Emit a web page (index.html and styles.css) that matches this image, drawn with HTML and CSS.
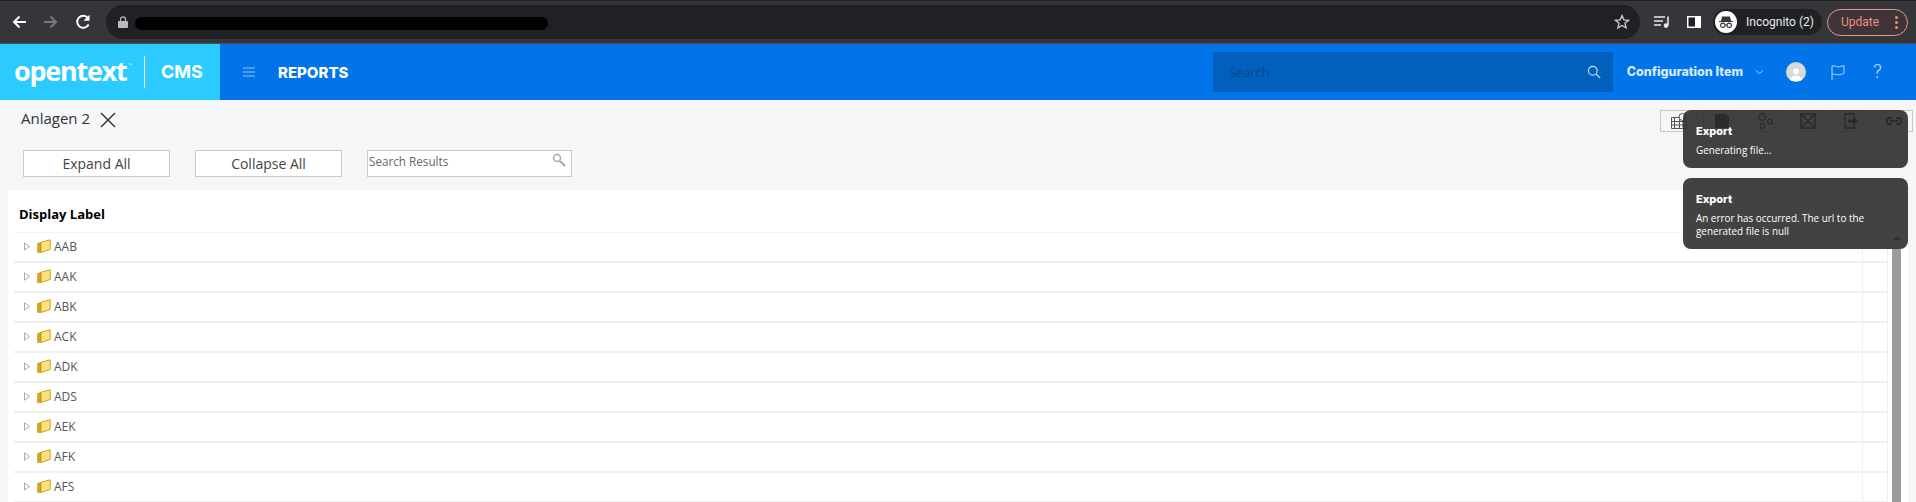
FILE: index.html
```html
<!DOCTYPE html>
<html lang="en">
<head>
<meta charset="utf-8">
<title>OpenText CMS Reports</title>
<link rel="stylesheet" href="styles.css">
</head>
<body>
<div class="browser">
  <svg class="nav-icon" viewBox="0 0 18 18"><path d="M16 9H4M9.500 3.500L4 9l5.500 5.500" fill="none" stroke="#fff" stroke-width="2"/></svg>
  <svg class="nav-icon" viewBox="0 0 18 18"><path d="M2 9h12M8.500 3.500L14 9l-5.500 5.500" fill="none" stroke="#77787b" stroke-width="2"/></svg>
  <svg class="nav-icon" viewBox="0 0 18 18"><path d="M14.600 11.500A6 6 0 1 1 14 5.200" fill="none" stroke="#fff" stroke-width="2"/><path d="M15.500 1.800v6h-6z" fill="#fff"/></svg>
  <div class="omnibox">
    <svg class="lock" viewBox="0 0 10 12"><path d="M2.500 5V3.300a2.500 2.500 0 0 1 5 0V5" fill="none" stroke="#b9babc" stroke-width="1.200"/><rect y="5" width="10" height="7" rx="1" fill="#b9babc"/></svg>
    <span class="redacted"></span>
    <svg class="star" viewBox="0 0 16 16"><path d="M8 1.600l1.900 4.300 4.600.4-3.500 3 1.100 4.600L8 11.500l-4.100 2.400L5 9.300l-3.500-3 4.600-.4z" fill="none" stroke="#c6c7c9" stroke-width="1.400"/></svg>
  </div>
  <svg class="queue" viewBox="0 0 16 12"><path d="M0 1h11M0 5h9M0 9h7" stroke="#e8eaed" stroke-width="1.500"/><path d="M14 .5V9.500" stroke="#e8eaed" stroke-width="1.600"/><circle cx="12" cy="9.600" r="2.300" fill="#e8eaed"/></svg>
  <svg class="sidepanel" viewBox="0 0 14 12"><rect width="14" height="12" fill="#fff"/><rect x="1.500" y="1.500" width="6.500" height="9" fill="#202124"/></svg>
  <div class="incognito">
    <span class="incognito-face"><svg viewBox="0 0 16 16" width="16" height="16"><path d="M1 7h14v1H1zM4 2.500h8L13 7H3z" fill="#35363a"/><circle cx="4.800" cy="11.300" r="2.200" fill="none" stroke="#35363a" stroke-width="1.100"/><circle cx="11.200" cy="11.300" r="2.200" fill="none" stroke="#35363a" stroke-width="1.100"/><path d="M7 11h2" stroke="#35363a"/></svg></span>
    <span>Incognito (2)</span>
  </div>
  <div class="update"><span>Update</span><span class="dots"><i></i><i></i><i></i></span></div>
</div>

<header class="appbar">
  <div class="brand">
    <span class="brand-word">opentext<sup>™</sup></span>
    <span class="brand-name">CMS</span>
  </div>
  <svg class="burger" viewBox="0 0 12 10"><path d="M0 1h12M0 5h12M0 9h12" stroke="#8fc3f5" stroke-width="1.200"/></svg>
  <div class="section">REPORTS</div>
  <div class="global-search">
    <span>Search</span>
    <svg viewBox="0 0 14 14" width="14" height="14"><circle cx="5.800" cy="5.800" r="4.400" fill="none" stroke="#cfe4fa" stroke-width="1.100"/><path d="M9 9l4.200 4.200" stroke="#cfe4fa" stroke-width="1.100"/></svg>
  </div>
  <div class="ci-select">Configuration Item
    <svg viewBox="0 0 10 6" width="9" height="6"><path d="M1 1l4 4 4-4" fill="none" stroke="#bcdcfb" stroke-width="1"/></svg>
  </div>
  <span class="avatar"><svg viewBox="0 0 16 16" width="16" height="16"><circle cx="8" cy="5.500" r="3" fill="#fff"/><path d="M2 15c.5-4 3-5.200 6-5.200s5.500 1.200 6 5.200z" fill="#fff"/></svg></span>
  <svg class="flag" viewBox="0 0 14 16"><path d="M1 16V2c3-1 3.500 .8 6 .8S11 2 13 1.500v8c-2 .5-3.500 1.300-6 1.300S3 9.500 1 10.500" fill="none" stroke="#b5d7fa" stroke-width="1"/></svg>
  <span class="help">?</span>
</header>

<main class="page">
  <div class="title-row">
    <div class="title">Anlagen 2
      <svg viewBox="0 0 16 16" width="16" height="16"><path d="M1 1l14 14M15 1L1 15" stroke="#2b2b2b" stroke-width="1.400"/></svg>
    </div>
    <div class="tools">
      <button class="tool"><svg viewBox="0 0 16 16" width="16" height="16"><path d="M.5 4.500h8v11h-8zM8.500 8.500h7v7h-7zM.5 8.500h15M.5 12h15M3.500 4.500v11M8.500 4.500v11M12 8.500v7" fill="none" stroke="#555" stroke-width="1"/><circle cx="11.500" cy="4" r="3.500" fill="#f5f6f8" stroke="#555"/></svg></button>
      <button class="tool"><svg viewBox="0 0 16 16" width="16" height="16"><path d="M1 1h11l3 3v11H1z" fill="#111"/></svg></button>
      <button class="tool"><svg viewBox="0 0 16 16" width="16" height="16"><circle cx="5" cy="4" r="3.300" fill="none" stroke="#111" stroke-width="1.200"/><circle cx="13" cy="8.500" r="2.400" fill="none" stroke="#111" stroke-width="1.200"/><circle cx="5.500" cy="13" r="2.400" fill="none" stroke="#111" stroke-width="1.200"/></svg></button>
      <button class="tool"><svg viewBox="0 0 16 16" width="16" height="16"><path d="M1 1h14L1 15h14zM1 1v14M15 1v14" fill="none" stroke="#111" stroke-width="1.500"/></svg></button>
      <button class="tool"><svg viewBox="0 0 16 16" width="16" height="16"><path d="M2 1h9v14H2z" fill="none" stroke="#000" stroke-width="1.300"/><path d="M5 6.500h5V4l5 4-5 4V9.500H5z" fill="#000"/></svg></button>
      <button class="tool"><svg viewBox="0 0 16 8" width="16" height="8"><path d="M6 1H2.500A1.500 1.500 0 0 0 1 2.500v3A1.500 1.500 0 0 0 2.500 7H6M10 1h3.500A1.500 1.500 0 0 1 15 2.500v3A1.500 1.500 0 0 1 13.500 7H10M4 4h8" fill="none" stroke="#000" stroke-width="1.800"/></svg></button>
    </div>
  </div>

  <div class="actions">
    <button class="action">Expand All</button>
    <button class="action">Collapse All</button>
    <div class="result-search">
      <span>Search Results</span>
      <svg viewBox="0 0 14 14" width="14" height="14"><circle cx="5" cy="5" r="3.500" fill="none" stroke="#aaa" stroke-width="1.500"/><path d="M8 8l5 5" stroke="#aaa" stroke-width="2.200"/></svg>
    </div>
  </div>

  <section class="panel">
    <div class="panel-head">Display Label</div>
    <div class="rows">
      <div class="row"><div class="cell-main"><svg class="twisty" viewBox="0 0 6 9"><path d="M.5.8l5 3.700-5 3.700z" fill="#fff" stroke="#a9a9a9"/></svg><svg class="folder" viewBox="0 0 14 14"><path d="M.6 4.500L4 3.500v9.800l-3.400.3z" fill="#d6a71c" stroke="#b98d10" stroke-width=".6"/><path d="M4 3.200L13.200.8v9.700L4 13.500z" fill="#ffe27a" stroke="#c79a14" stroke-width=".9"/></svg>AAB</div><div class="cell-a"></div><div class="cell-b"></div></div>
      <div class="row"><div class="cell-main"><svg class="twisty" viewBox="0 0 6 9"><path d="M.5.8l5 3.700-5 3.700z" fill="#fff" stroke="#a9a9a9"/></svg><svg class="folder" viewBox="0 0 14 14"><path d="M.6 4.500L4 3.500v9.800l-3.400.3z" fill="#d6a71c" stroke="#b98d10" stroke-width=".6"/><path d="M4 3.200L13.200.8v9.700L4 13.500z" fill="#ffe27a" stroke="#c79a14" stroke-width=".9"/></svg>AAK</div><div class="cell-a"></div><div class="cell-b"></div></div>
      <div class="row"><div class="cell-main"><svg class="twisty" viewBox="0 0 6 9"><path d="M.5.8l5 3.700-5 3.700z" fill="#fff" stroke="#a9a9a9"/></svg><svg class="folder" viewBox="0 0 14 14"><path d="M.6 4.500L4 3.500v9.800l-3.400.3z" fill="#d6a71c" stroke="#b98d10" stroke-width=".6"/><path d="M4 3.200L13.200.8v9.700L4 13.500z" fill="#ffe27a" stroke="#c79a14" stroke-width=".9"/></svg>ABK</div><div class="cell-a"></div><div class="cell-b"></div></div>
      <div class="row"><div class="cell-main"><svg class="twisty" viewBox="0 0 6 9"><path d="M.5.8l5 3.700-5 3.700z" fill="#fff" stroke="#a9a9a9"/></svg><svg class="folder" viewBox="0 0 14 14"><path d="M.6 4.500L4 3.500v9.800l-3.400.3z" fill="#d6a71c" stroke="#b98d10" stroke-width=".6"/><path d="M4 3.200L13.200.8v9.700L4 13.500z" fill="#ffe27a" stroke="#c79a14" stroke-width=".9"/></svg>ACK</div><div class="cell-a"></div><div class="cell-b"></div></div>
      <div class="row"><div class="cell-main"><svg class="twisty" viewBox="0 0 6 9"><path d="M.5.8l5 3.700-5 3.700z" fill="#fff" stroke="#a9a9a9"/></svg><svg class="folder" viewBox="0 0 14 14"><path d="M.6 4.500L4 3.500v9.800l-3.400.3z" fill="#d6a71c" stroke="#b98d10" stroke-width=".6"/><path d="M4 3.200L13.200.8v9.700L4 13.500z" fill="#ffe27a" stroke="#c79a14" stroke-width=".9"/></svg>ADK</div><div class="cell-a"></div><div class="cell-b"></div></div>
      <div class="row"><div class="cell-main"><svg class="twisty" viewBox="0 0 6 9"><path d="M.5.8l5 3.700-5 3.700z" fill="#fff" stroke="#a9a9a9"/></svg><svg class="folder" viewBox="0 0 14 14"><path d="M.6 4.500L4 3.500v9.800l-3.400.3z" fill="#d6a71c" stroke="#b98d10" stroke-width=".6"/><path d="M4 3.200L13.200.8v9.700L4 13.500z" fill="#ffe27a" stroke="#c79a14" stroke-width=".9"/></svg>ADS</div><div class="cell-a"></div><div class="cell-b"></div></div>
      <div class="row"><div class="cell-main"><svg class="twisty" viewBox="0 0 6 9"><path d="M.5.8l5 3.700-5 3.700z" fill="#fff" stroke="#a9a9a9"/></svg><svg class="folder" viewBox="0 0 14 14"><path d="M.6 4.500L4 3.500v9.800l-3.400.3z" fill="#d6a71c" stroke="#b98d10" stroke-width=".6"/><path d="M4 3.200L13.200.8v9.700L4 13.500z" fill="#ffe27a" stroke="#c79a14" stroke-width=".9"/></svg>AEK</div><div class="cell-a"></div><div class="cell-b"></div></div>
      <div class="row"><div class="cell-main"><svg class="twisty" viewBox="0 0 6 9"><path d="M.5.8l5 3.700-5 3.700z" fill="#fff" stroke="#a9a9a9"/></svg><svg class="folder" viewBox="0 0 14 14"><path d="M.6 4.500L4 3.500v9.800l-3.400.3z" fill="#d6a71c" stroke="#b98d10" stroke-width=".6"/><path d="M4 3.200L13.200.8v9.700L4 13.500z" fill="#ffe27a" stroke="#c79a14" stroke-width=".9"/></svg>AFK</div><div class="cell-a"></div><div class="cell-b"></div></div>
      <div class="row"><div class="cell-main"><svg class="twisty" viewBox="0 0 6 9"><path d="M.5.8l5 3.700-5 3.700z" fill="#fff" stroke="#a9a9a9"/></svg><svg class="folder" viewBox="0 0 14 14"><path d="M.6 4.500L4 3.500v9.800l-3.400.3z" fill="#d6a71c" stroke="#b98d10" stroke-width=".6"/><path d="M4 3.200L13.200.8v9.700L4 13.500z" fill="#ffe27a" stroke="#c79a14" stroke-width=".9"/></svg>AFS</div><div class="cell-a"></div><div class="cell-b"></div></div>
    </div>
    <div class="scrollbar"><i class="scroll-up"></i><i class="scroll-thumb"></i></div>
  </section>
</main>

<aside class="toasts">
  <div class="toast"><strong>Export</strong><p>Generating file...</p></div>
  <div class="toast"><strong>Export</strong><p>An error has occurred. The url to the generated file is null</p></div>
</aside>
</body>
</html>
```
FILE: styles.css
```css
* { box-sizing: border-box; }
html, body { margin: 0; height: 502px; overflow: hidden; }
body { font-family: "Open Sans", "Liberation Sans", sans-serif; background: #f5f6f8; color: #333; position: relative; }

/* browser chrome */
.browser { height: 44px; background: #35363a; border-top: 1px solid #202124; border-bottom: 1px solid #4a4b4f; display: flex; align-items: center; padding: 0 0 0 10px; }
.nav-icon { width: 18px; height: 18px; margin-right: 14px; flex: none; }
.omnibox { flex: none; width: 1534px; height: 34px; border-radius: 17px; background: #202124; display: flex; align-items: center; padding: 0 10px 0 12px; }
.lock { width: 10px; height: 12px; margin-top: -1px; flex: none; }
.redacted { width: 413px; height: 13px; margin: 3px 0 0 7px; background: #000; border-radius: 7px; flex: none; }
.star { width: 16px; height: 16px; margin-left: auto; }
.queue { width: 16px; height: 12px; margin-left: 14px; flex: none; }
.sidepanel { width: 14px; height: 12px; margin-left: 17px; flex: none; }
.incognito { display: flex; align-items: center; gap: 9px; height: 26px; width: 109px; margin-left: 12px; padding-left: 2px; background: #202124; border-radius: 13px; color: #e8eaed; font: 12px/1 Roboto, sans-serif; white-space: nowrap; flex: none; }
.incognito-face { width: 22px; height: 22px; border-radius: 50%; background: #fff; display: flex; align-items: center; justify-content: center; }
.update { margin-left: 5px; width: 81px; height: 27px; border: 1px solid #e9978c; border-radius: 14px; background: #3f3437; color: #ee8f84; font: 12px/1 Roboto, sans-serif; display: flex; align-items: center; padding-left: 13px; flex: none; }
.dots { display: flex; flex-direction: column; gap: 2px; margin-left: 16px; }
.dots i { width: 3px; height: 3px; border-radius: 50%; background: #ee8f84; }

/* app header */
.appbar { height: 56px; background: #0074e8; display: flex; align-items: center; color: #fff; }
.brand { width: 220px; height: 56px; background: #2bcbff; display: flex; align-items: center; flex: none; padding-left: 14px; }
.brand-word { font: 700 27px/1 "Open Sans", sans-serif; letter-spacing: -1.250px; width: 131px; height: 32px; padding-bottom: 4px; border-right: 1px solid #fff; flex: none; display: flex; align-items: center; white-space: nowrap; }
.brand-word sup { font-size: 5px; margin: -10px 0 0 2px; letter-spacing: 0; color: #cdf1ff; }
.brand-name { font: 700 18px/1 Inter, sans-serif; margin-left: 16px; }
.burger { width: 12px; height: 10px; margin-left: 23px; flex: none; }
.section { font: 800 15px/1 Inter, sans-serif; margin-left: 23px; }
.global-search { width: 400px; height: 40px; margin-left: auto; background: #0060bb; display: flex; align-items: center; justify-content: space-between; padding: 0 12px 0 16px; font-size: 13px; color: #0a4684; }
.ci-select { font: 800 12.500px/1 Inter, sans-serif; color: #d6eaff; margin-left: 14px; display: flex; align-items: center; gap: 12px; white-space: nowrap; }
.avatar { width: 20px; height: 20px; border-radius: 50%; background: #d9d9d9; display: flex; align-items: flex-end; justify-content: center; overflow: hidden; margin-left: 22px; flex: none; }
.flag { width: 14px; height: 16px; margin-left: 25px; flex: none; }
.help { font: 300 18px/1 Inter, sans-serif; color: #b5d7fa; margin: 0 34px 0 28px; }

/* page */
.page { height: 402px; display: flex; flex-direction: column; }
.title-row { height: 50px; display: flex; justify-content: space-between; padding: 10px 3px 0 21px; }
.title { font-size: 15px; line-height: 20px; color: #333; display: flex; align-items: flex-start; gap: 10px; height: 20px; margin-top: -2px; }
.title svg { margin-top: 4px; }
.tools { display: flex; gap: 5px; }
.tool { width: 38px; height: 22px; background: none; border: 1px solid #c8c8c8; padding: 0; display: flex; align-items: center; justify-content: center; }
.actions { height: 40px; display: flex; padding-left: 23px; gap: 25px; }
.action { width: 147px; height: 27px; background: #fff; border: 1px solid #c9c9c9; font: 14px/1 "Open Sans", sans-serif; color: #444; padding: 0; }
.result-search { width: 205px; height: 27px; background: #fff; border: 1px solid #c9c9c9; display: flex; align-items: flex-start; justify-content: space-between; padding: 2px 5px 0 1px; font-size: 11.700px; line-height: 16px; color: #666; }
.panel { position: relative; flex: 1; margin: 0 8px; background: #fff; overflow: hidden; }
.panel-head { height: 43px; padding: 15px 0 0 5px; margin: 0 20px 0 6px; border-bottom: 1px solid #f4f4f4; font: 700 13px/18px "Open Sans", sans-serif; color: #000; }
.row { height: 30px; display: flex; border-bottom: 2px solid #efefef; margin: 0 20px 0 6px; }
.cell-main { flex: 1; display: flex; align-items: center; padding: 0 0 2px 10px; font-size: 12px; color: #555; }
.cell-a { width: 1px; background: #efefef; margin-right: 24px; }
.cell-b { width: 1px; background: #efefef; }
.twisty { width: 6px; height: 9px; margin-right: 7px; flex: none; }
.folder { width: 14px; height: 14px; margin-right: 3px; flex: none; }
.scrollbar { position: absolute; right: 7px; top: 46px; width: 9px; bottom: 0; }
.scroll-up { display: block; width: 0; height: 0; margin: 0 auto; border: 4px solid transparent; border-bottom-color: #555; border-top: 0; }
.scroll-thumb { display: block; margin-top: 7px; height: 300px; background: #9b9b9b; border-radius: 4px 4px 0 0; }

/* toasts */
.toasts { position: absolute; left: 1683px; top: 110px; width: 225px; display: flex; flex-direction: column; gap: 10px; }
.toast { background: rgba(46,46,46,.9); border-radius: 8px; padding: 13px 13px 11px; color: #fff; }
.toast strong { display: block; font: 800 11px/16px Inter, sans-serif; }
.toast p { margin: 5px 0 0; font: 9.900px/13px "Open Sans", sans-serif; }
```
